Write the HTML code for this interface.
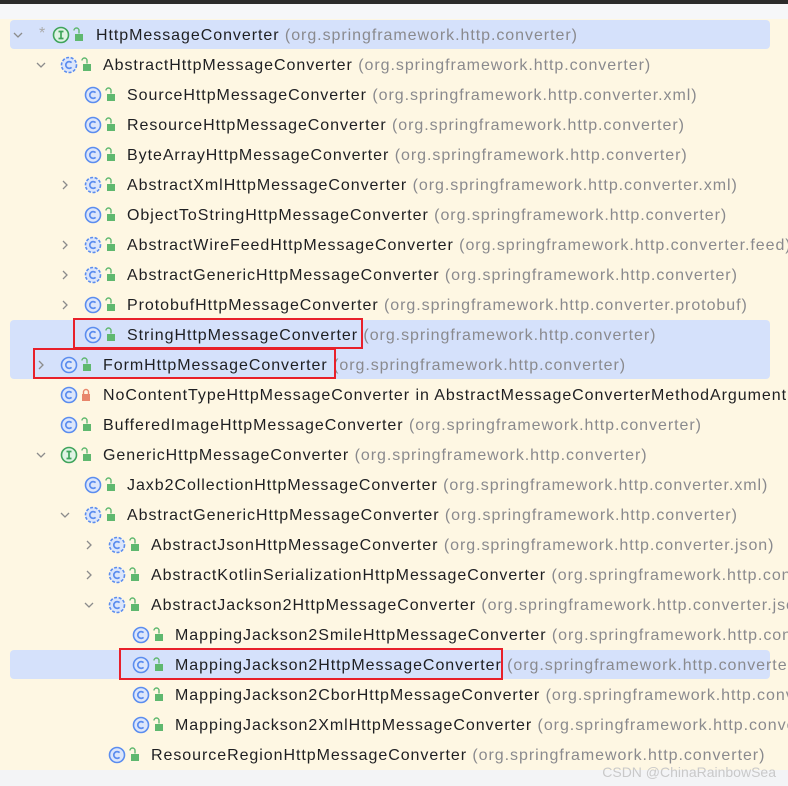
<!DOCTYPE html>
<html><head><meta charset="utf-8"><style>
html,body{margin:0;padding:0}
body{width:788px;height:786px;position:relative;overflow:hidden;background:#fef7e3;font-family:"Liberation Sans",sans-serif;font-size:16px}
.top{position:absolute;left:0;top:0;width:788px;height:4px;background:#2b2b2b}
.bar{position:absolute;left:0;top:4px;width:788px;height:15px;background:#f6f7f9}
.bot{position:absolute;left:0;top:770px;width:788px;height:16px;background:#f3f4f6}
.hl{position:absolute;left:10px;width:760px;background:#d5e1fb;border-radius:4px}
.row{position:absolute;left:0;height:30px;line-height:31px;white-space:nowrap;letter-spacing:0.95px}
.n{color:#1e1f22}.p{color:#8a8a8e}
svg.i{position:absolute;top:6px}
.box{position:absolute;border:2px solid #e8202a;box-sizing:border-box}
.wm{position:absolute;right:12px;top:764px;color:#c9c9c9;font-size:14px}
</style></head><body>
<svg width="0" height="0" style="position:absolute">
<defs>
<symbol id="c" viewBox="0 0 18 18"><circle cx="9" cy="9" r="7.5" fill="#dce6fb" stroke="#5b8def" stroke-width="1.6"/><path d="M11.6 6.6A3.4 3.4 0 1 0 11.6 11.4" fill="none" stroke="#5b8def" stroke-width="1.7"/></symbol>
<symbol id="a" viewBox="0 0 18 18"><circle cx="9" cy="9" r="7.5" fill="#dce6fb" stroke="#5b8def" stroke-width="1.6" stroke-dasharray="3 1.6"/><path d="M11.6 6.6A3.4 3.4 0 1 0 11.6 11.4" fill="none" stroke="#5b8def" stroke-width="1.7"/></symbol>
<symbol id="I" viewBox="0 0 18 18"><circle cx="9" cy="9" r="7.5" fill="#dff3e4" stroke="#3fa45b" stroke-width="1.6"/><path d="M6.5 5.5h5M6.5 12.5h5M9 5.5v7" stroke="#3fa45b" stroke-width="1.7"/></symbol>
<symbol id="l" viewBox="0 0 12 18"><path d="M2 4.5a2.5 2.5 0 0 1 5 0v3" fill="none" stroke="#5fb86f" stroke-width="1.4"/><rect x="3" y="8" width="8" height="7" fill="#5fb86f"/></symbol>
<symbol id="L" viewBox="0 0 12 18"><path d="M3.5 8V6a2.5 2.5 0 0 1 5 0v2" fill="none" stroke="#e8866b" stroke-width="1.4"/><rect x="2" y="8" width="8" height="7" fill="#e8866b"/></symbol>
<symbol id="v" viewBox="0 0 12 12"><path d="M2 4l4 4 4-4" fill="none" stroke="#8c8c8c" stroke-width="1.3"/></symbol>
<symbol id="r" viewBox="0 0 12 12"><path d="M4 2l4 4-4 4" fill="none" stroke="#8c8c8c" stroke-width="1.3"/></symbol>
</defs></svg>
<div class="top"></div><div class="bar"></div>
<div class="hl" style="top:20px;height:29px"></div>
<div class="hl" style="top:320px;height:59px"></div>
<div class="hl" style="top:650px;height:29px"></div>

<div class="row" style="top:20px"><svg class="i" style="left:12px;top:9px" width="12" height="12"><use href="#v"/></svg><span style="position:absolute;left:39px;color:#aaa;top:-2px">*</span><svg class="i" style="left:52px" width="18" height="18"><use href="#I"/></svg><svg class="i" style="left:72px" width="12" height="18"><use href="#l"/></svg><span style="position:absolute;left:96px"><span class="n">HttpMessageConverter</span> <span class="p">(org.springframework.http.converter)</span></span></div>

<div class="row" style="top:50px"><svg class="i" style="left:35px;top:9px" width="12" height="12"><use href="#v"/></svg><svg class="i" style="left:60px" width="18" height="18"><use href="#a"/></svg><svg class="i" style="left:80px" width="12" height="18"><use href="#l"/></svg><span style="position:absolute;left:103px"><span class="n">AbstractHttpMessageConverter</span> <span class="p">(org.springframework.http.converter)</span></span></div>

<div class="row" style="top:80px"><svg class="i" style="left:84px" width="18" height="18"><use href="#c"/></svg><svg class="i" style="left:104px" width="12" height="18"><use href="#l"/></svg><span style="position:absolute;left:127px"><span class="n">SourceHttpMessageConverter</span> <span class="p">(org.springframework.http.converter.xml)</span></span></div>
<div class="row" style="top:110px"><svg class="i" style="left:84px" width="18" height="18"><use href="#c"/></svg><svg class="i" style="left:104px" width="12" height="18"><use href="#l"/></svg><span style="position:absolute;left:127px"><span class="n">ResourceHttpMessageConverter</span> <span class="p">(org.springframework.http.converter)</span></span></div>
<div class="row" style="top:140px"><svg class="i" style="left:84px" width="18" height="18"><use href="#c"/></svg><svg class="i" style="left:104px" width="12" height="18"><use href="#l"/></svg><span style="position:absolute;left:127px"><span class="n">ByteArrayHttpMessageConverter</span> <span class="p">(org.springframework.http.converter)</span></span></div>
<div class="row" style="top:170px"><svg class="i" style="left:59px;top:9px" width="12" height="12"><use href="#r"/></svg><svg class="i" style="left:84px" width="18" height="18"><use href="#a"/></svg><svg class="i" style="left:104px" width="12" height="18"><use href="#l"/></svg><span style="position:absolute;left:127px"><span class="n">AbstractXmlHttpMessageConverter</span> <span class="p">(org.springframework.http.converter.xml)</span></span></div>
<div class="row" style="top:200px"><svg class="i" style="left:84px" width="18" height="18"><use href="#c"/></svg><svg class="i" style="left:104px" width="12" height="18"><use href="#l"/></svg><span style="position:absolute;left:127px"><span class="n">ObjectToStringHttpMessageConverter</span> <span class="p">(org.springframework.http.converter)</span></span></div>
<div class="row" style="top:230px"><svg class="i" style="left:59px;top:9px" width="12" height="12"><use href="#r"/></svg><svg class="i" style="left:84px" width="18" height="18"><use href="#a"/></svg><svg class="i" style="left:104px" width="12" height="18"><use href="#l"/></svg><span style="position:absolute;left:127px"><span class="n">AbstractWireFeedHttpMessageConverter</span> <span class="p">(org.springframework.http.converter.feed)</span></span></div>
<div class="row" style="top:260px"><svg class="i" style="left:59px;top:9px" width="12" height="12"><use href="#r"/></svg><svg class="i" style="left:84px" width="18" height="18"><use href="#a"/></svg><svg class="i" style="left:104px" width="12" height="18"><use href="#l"/></svg><span style="position:absolute;left:127px"><span class="n">AbstractGenericHttpMessageConverter</span> <span class="p">(org.springframework.http.converter)</span></span></div>
<div class="row" style="top:290px"><svg class="i" style="left:59px;top:9px" width="12" height="12"><use href="#r"/></svg><svg class="i" style="left:84px" width="18" height="18"><use href="#c"/></svg><svg class="i" style="left:104px" width="12" height="18"><use href="#l"/></svg><span style="position:absolute;left:127px"><span class="n">ProtobufHttpMessageConverter</span> <span class="p">(org.springframework.http.converter.protobuf)</span></span></div>
<div class="row" style="top:320px"><svg class="i" style="left:84px" width="18" height="18"><use href="#c"/></svg><svg class="i" style="left:104px" width="12" height="18"><use href="#l"/></svg><span style="position:absolute;left:127px"><span class="n">StringHttpMessageConverter</span> <span class="p">(org.springframework.http.converter)</span></span></div>

<div class="row" style="top:350px"><svg class="i" style="left:35px;top:9px" width="12" height="12"><use href="#r"/></svg><svg class="i" style="left:60px" width="18" height="18"><use href="#c"/></svg><svg class="i" style="left:80px" width="12" height="18"><use href="#l"/></svg><span style="position:absolute;left:103px"><span class="n">FormHttpMessageConverter</span> <span class="p">(org.springframework.http.converter)</span></span></div>
<div class="row" style="top:380px"><svg class="i" style="left:60px" width="18" height="18"><use href="#c"/></svg><svg class="i" style="left:80px" width="12" height="18"><use href="#L"/></svg><span style="position:absolute;left:103px"><span class="n">NoContentTypeHttpMessageConverter in AbstractMessageConverterMethodArgumentResolver</span></span></div>
<div class="row" style="top:410px"><svg class="i" style="left:60px" width="18" height="18"><use href="#c"/></svg><svg class="i" style="left:80px" width="12" height="18"><use href="#l"/></svg><span style="position:absolute;left:103px"><span class="n">BufferedImageHttpMessageConverter</span> <span class="p">(org.springframework.http.converter)</span></span></div>
<div class="row" style="top:440px"><svg class="i" style="left:35px;top:9px" width="12" height="12"><use href="#v"/></svg><svg class="i" style="left:60px" width="18" height="18"><use href="#I"/></svg><svg class="i" style="left:80px" width="12" height="18"><use href="#l"/></svg><span style="position:absolute;left:103px"><span class="n">GenericHttpMessageConverter</span> <span class="p">(org.springframework.http.converter)</span></span></div>

<div class="row" style="top:470px"><svg class="i" style="left:84px" width="18" height="18"><use href="#c"/></svg><svg class="i" style="left:104px" width="12" height="18"><use href="#l"/></svg><span style="position:absolute;left:127px"><span class="n">Jaxb2CollectionHttpMessageConverter</span> <span class="p">(org.springframework.http.converter.xml)</span></span></div>
<div class="row" style="top:500px"><svg class="i" style="left:59px;top:9px" width="12" height="12"><use href="#v"/></svg><svg class="i" style="left:84px" width="18" height="18"><use href="#a"/></svg><svg class="i" style="left:104px" width="12" height="18"><use href="#l"/></svg><span style="position:absolute;left:127px"><span class="n">AbstractGenericHttpMessageConverter</span> <span class="p">(org.springframework.http.converter)</span></span></div>

<div class="row" style="top:530px"><svg class="i" style="left:83px;top:9px" width="12" height="12"><use href="#r"/></svg><svg class="i" style="left:108px" width="18" height="18"><use href="#a"/></svg><svg class="i" style="left:128px" width="12" height="18"><use href="#l"/></svg><span style="position:absolute;left:151px"><span class="n">AbstractJsonHttpMessageConverter</span> <span class="p">(org.springframework.http.converter.json)</span></span></div>
<div class="row" style="top:560px"><svg class="i" style="left:83px;top:9px" width="12" height="12"><use href="#r"/></svg><svg class="i" style="left:108px" width="18" height="18"><use href="#a"/></svg><svg class="i" style="left:128px" width="12" height="18"><use href="#l"/></svg><span style="position:absolute;left:151px"><span class="n">AbstractKotlinSerializationHttpMessageConverter</span> <span class="p">(org.springframework.http.converter)</span></span></div>
<div class="row" style="top:590px"><svg class="i" style="left:83px;top:9px" width="12" height="12"><use href="#v"/></svg><svg class="i" style="left:108px" width="18" height="18"><use href="#a"/></svg><svg class="i" style="left:128px" width="12" height="18"><use href="#l"/></svg><span style="position:absolute;left:151px"><span class="n">AbstractJackson2HttpMessageConverter</span> <span class="p">(org.springframework.http.converter.json)</span></span></div>

<div class="row" style="top:620px"><svg class="i" style="left:132px" width="18" height="18"><use href="#c"/></svg><svg class="i" style="left:152px" width="12" height="18"><use href="#l"/></svg><span style="position:absolute;left:175px"><span class="n">MappingJackson2SmileHttpMessageConverter</span> <span class="p">(org.springframework.http.converter)</span></span></div>
<div class="row" style="top:650px"><svg class="i" style="left:132px" width="18" height="18"><use href="#c"/></svg><svg class="i" style="left:152px" width="12" height="18"><use href="#l"/></svg><span style="position:absolute;left:175px"><span class="n">MappingJackson2HttpMessageConverter</span> <span class="p">(org.springframework.http.converter)</span></span></div>
<div class="row" style="top:680px"><svg class="i" style="left:132px" width="18" height="18"><use href="#c"/></svg><svg class="i" style="left:152px" width="12" height="18"><use href="#l"/></svg><span style="position:absolute;left:175px"><span class="n">MappingJackson2CborHttpMessageConverter</span> <span class="p">(org.springframework.http.converter)</span></span></div>
<div class="row" style="top:710px"><svg class="i" style="left:132px" width="18" height="18"><use href="#c"/></svg><svg class="i" style="left:152px" width="12" height="18"><use href="#l"/></svg><span style="position:absolute;left:175px"><span class="n">MappingJackson2XmlHttpMessageConverter</span> <span class="p">(org.springframework.http.converter)</span></span></div>
<div class="row" style="top:740px"><svg class="i" style="left:108px" width="18" height="18"><use href="#c"/></svg><svg class="i" style="left:128px" width="12" height="18"><use href="#l"/></svg><span style="position:absolute;left:151px"><span class="n">ResourceRegionHttpMessageConverter</span> <span class="p">(org.springframework.http.converter)</span></span></div>

<div class="bot"></div>
<div class="wm">CSDN @ChinaRainbowSea</div>

<div class="box" style="left:73px;top:318px;width:290px;height:31px"></div>
<div class="box" style="left:33px;top:348px;width:303px;height:31px"></div>
<div class="box" style="left:119px;top:648px;width:384px;height:32px"></div>
</body></html>
